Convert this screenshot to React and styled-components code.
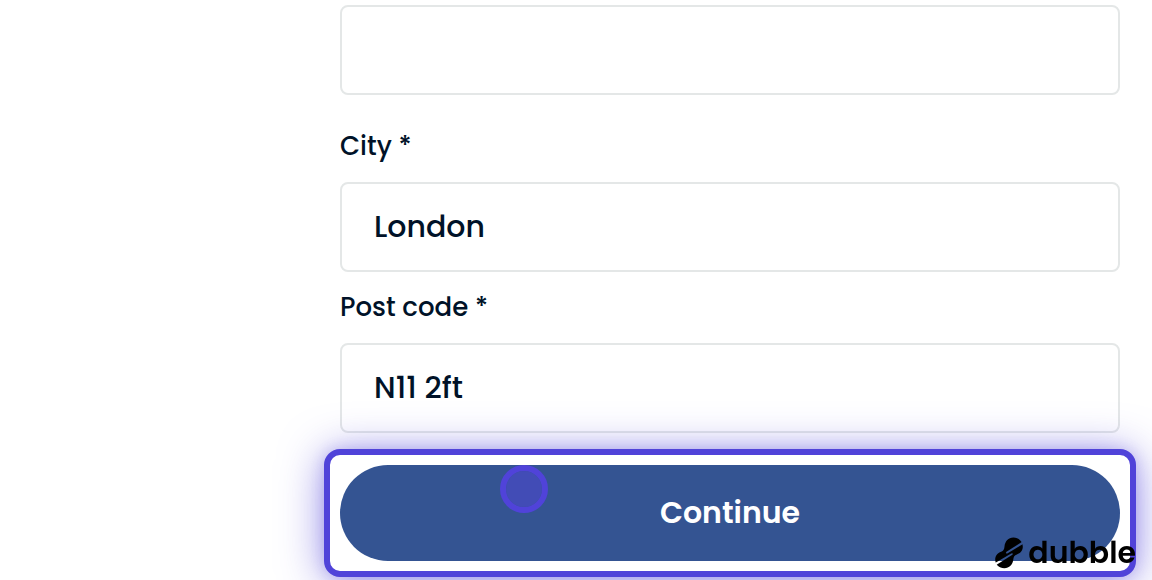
import styled, { createGlobalStyle } from 'styled-components';

const GlobalStyle = createGlobalStyle`
	* {
		box-sizing: border-box;
	}

	body {
		margin: 0;
		background-color: #fff;
		color: #001228;
		font-family: Poppins, Inter, sans-serif;
		font-weight: 500;
	}
`;

const Form = styled.form`
	display: flex;
	flex-direction: column;
	padding: 5px 32px 3px 340px;
`;

const Field = styled.div`
	display: flex;
	flex-direction: column;
	margin-top: ${({ $spaced }) => ($spaced ? '31px' : '15px')};
`;

const Label = styled.label`
	margin-bottom: 16px;
	font-size: 26px;
	line-height: 40px;
`;

const Input = styled.input`
	width: 100%;
	height: 90px;
	padding: 0 32px;
	border: 2px solid #e4e7e7;
	border-radius: 8px;
	background-color: #fff;
	color: inherit;
	font: inherit;
	font-size: 30px;
	outline: none;
`;

const Highlight = styled.div`
	position: relative;
	display: flex;
	margin: 16px -16px 0;
	padding: 10px;
	border: 6px solid #5043d9;
	border-radius: 16px;
	background-color: #fff;
	box-shadow:
		0 0 14px rgba(80, 67, 217, 0.2),
		0 4px 44px rgba(80, 67, 217, 0.6);
`;

const Button = styled.button`
	width: 100%;
	height: 96px;
	padding: 0;
	border: none;
	border-radius: 48px;
	background-color: #345492;
	color: #fff;
	font: inherit;
	font-size: 30px;
	font-weight: 600;
	cursor: pointer;
`;

const ClickMarker = styled.span`
	position: absolute;
	top: 10px;
	left: 170px;
	width: 48px;
	height: 48px;
	border: 6px solid #5043d9;
	border-radius: 50%;
	background-color: rgba(80, 67, 217, 0.5);
	background-clip: padding-box;
	pointer-events: none;
`;

const Brand = styled.div`
	position: fixed;
	right: 16px;
	bottom: 7px;
	display: flex;
	align-items: center;
	gap: 5px;
	color: #000;
	font-size: 30px;
	font-weight: 600;
	line-height: 40px;
`;

const BrandIcon = () => (
	<svg width="28" height="32" viewBox="0 0 28 32" fill="currentColor" aria-hidden="true">
		<mask id="slashes">
			<rect width="28" height="32" fill="#fff" />
			<path d="M29 3.700 L11.500 14.800 Q10 16.900 12.300 16.400 L29 6.500Z" fill="#000" />
			<path d="M-1 26.700 L16.200 16.600 Q18.500 15.800 17.400 17.700 L-1 29.500Z" fill="#000" />
		</mask>
		<path
			mask="url(#slashes)"
			d="M18.400.5c5.300 0 9.400 4 9.400 9 0 3.900-2.300 6.700-5.900 7.900-2.500.8-3.300 2.400-3.600 5.200-.5 5-4 8.700-9 8.700-5.300 0-9.100-3.700-9.100-8.700 0-3.900 2.300-6.700 5.900-7.900 2.500-.8 3.100-2.400 3.400-5.200C10 4.300 13.400.5 18.400.5Z"
		/>
	</svg>
);

const App = () => (
	<>
		<GlobalStyle />
		<Form onSubmit={(event) => event.preventDefault()}>
			<Input type="text" aria-label="Address line 2" />
			<Field $spaced>
				<Label htmlFor="city">City *</Label>
				<Input id="city" type="text" defaultValue="London" />
			</Field>
			<Field>
				<Label htmlFor="postcode">Post code *</Label>
				<Input id="postcode" type="text" defaultValue="N11 2ft" />
			</Field>
			<Highlight>
				<Button type="submit">Continue</Button>
				<ClickMarker />
			</Highlight>
		</Form>
		<Brand>
			<BrandIcon />
			<span>dubble</span>
		</Brand>
	</>
);

export default App;
